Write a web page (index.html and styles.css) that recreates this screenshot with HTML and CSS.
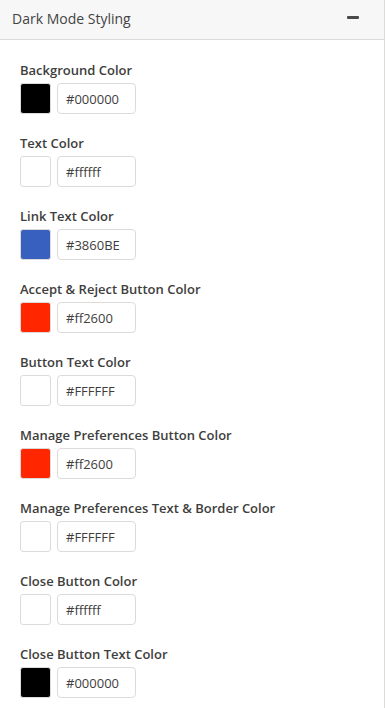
FILE: index.html
```html
<!DOCTYPE html>
<html lang="en">
  <head>
    <meta charset="UTF-8" />
    <meta name="viewport" content="width=device-width, initial-scale=1.0" />
    <title>Dark Mode Styling</title>
    <link rel="stylesheet" href="styles.css">
  </head>
  <body>
    <section class="panel">
      <header class="panel-header">
        <h2 class="panel-title">Dark Mode Styling</h2>
        <button class="panel-toggle" type="button" aria-label="Collapse"><span></span></button>
      </header>

      <div class="panel-body">
        <div class="field">
          <label class="field-label">Background Color</label>
          <div class="field-row">
            <span class="swatch" style="background-color: #000000"></span>
            <input class="hex-input" type="text" value="#000000" />
          </div>
        </div>
        <div class="field">
          <label class="field-label">Text Color</label>
          <div class="field-row">
            <span class="swatch" style="background-color: #ffffff"></span>
            <input class="hex-input" type="text" value="#ffffff" />
          </div>
        </div>
        <div class="field">
          <label class="field-label">Link Text Color</label>
          <div class="field-row">
            <span class="swatch" style="background-color: #3860BE"></span>
            <input class="hex-input" type="text" value="#3860BE" />
          </div>
        </div>
        <div class="field">
          <label class="field-label">Accept &amp; Reject Button Color</label>
          <div class="field-row">
            <span class="swatch" style="background-color: #ff2600"></span>
            <input class="hex-input" type="text" value="#ff2600" />
          </div>
        </div>
        <div class="field">
          <label class="field-label">Button Text Color</label>
          <div class="field-row">
            <span class="swatch" style="background-color: #FFFFFF"></span>
            <input class="hex-input" type="text" value="#FFFFFF" />
          </div>
        </div>
        <div class="field">
          <label class="field-label">Manage Preferences Button Color</label>
          <div class="field-row">
            <span class="swatch" style="background-color: #ff2600"></span>
            <input class="hex-input" type="text" value="#ff2600" />
          </div>
        </div>
        <div class="field">
          <label class="field-label">Manage Preferences Text &amp; Border Color</label>
          <div class="field-row">
            <span class="swatch" style="background-color: #FFFFFF"></span>
            <input class="hex-input" type="text" value="#FFFFFF" />
          </div>
        </div>
        <div class="field">
          <label class="field-label">Close Button Color</label>
          <div class="field-row">
            <span class="swatch" style="background-color: #ffffff"></span>
            <input class="hex-input" type="text" value="#ffffff" />
          </div>
        </div>
        <div class="field">
          <label class="field-label">Close Button Text Color</label>
          <div class="field-row">
            <span class="swatch" style="background-color: #000000"></span>
            <input class="hex-input" type="text" value="#000000" />
          </div>
        </div>
      </div>
    </section>
  </body>
</html>
```

FILE: styles.css
```css
/* resets */
* {
  padding: 0;
  margin: 0;
  box-sizing: border-box;
}
body {
  font-family: "Open Sans", "Liberation Sans", sans-serif;
  background: #fff;
  color: #3e3e3c;
}

.panel {
  width: 385px;
  min-height: 708px;
  border-right: 1px solid #dddbda;
  background: #fff;
}

/* header */
.panel-header {
  display: flex;
  align-items: center;
  justify-content: space-between;
  height: 40px;
  padding: 0 25px 0 12px;
  background-color: #f7f7f7;
  border-bottom: 1px solid #dddbda;
}
.panel-title {
  font-size: 14px;
  font-weight: 400;
  color: #444;
  line-height: 1;
  margin-top: -2px;
}
.panel-toggle {
  border: none;
  background: none;
  width: 12px;
  height: 12px;
  display: flex;
  align-items: center;
  margin-top: -4px;
  cursor: pointer;
}
.panel-toggle span {
  display: block;
  width: 12px;
  height: 3px;
  background-color: #4a4a4a;
  border-radius: 1px;
}

/* fields */
.panel-body {
  padding: 21px 20px 0 20px;
}
.field {
  margin-bottom: 20px;
}
.field-label {
  display: block;
  font-size: 13px;
  font-weight: 600;
  line-height: 18px;
  color: #3e3e3c;
  margin-bottom: 4px;
}
.field-row {
  display: flex;
  gap: 6px;
}
.swatch {
  display: block;
  width: 31px;
  height: 31px;
  border: 1px solid #dddbda;
  border-radius: 3px;
}
.hex-input {
  width: 79px;
  height: 31px;
  padding: 0 8px;
  border: 1px solid #dddbda;
  border-radius: 4px;
  font-family: "Open Sans", "Liberation Sans", sans-serif;
  font-size: 13px;
  color: #3e3e3c;
  background: #fff;
}
.hex-input:focus {
  outline: none;
}
```
